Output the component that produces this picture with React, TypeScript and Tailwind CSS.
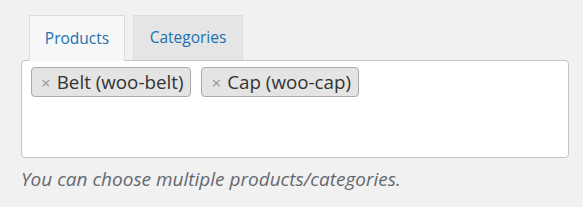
import React from 'react';

const tags = ['Belt (woo-belt)', 'Cap (woo-cap)'];

export default function App() {
  return (
    <div
      className="w-[583px] h-[207px] bg-[#f1f1f1] pt-[15px] pl-[21px]"
      style={{ fontFamily: '"Open Sans", "Noto Sans", sans-serif' }}
    >
      <div className="flex pl-[8px] gap-[8px]">
        <div className="h-[46px] w-[96px] flex items-center justify-center border border-[#dcdcde] border-b-0 bg-[#f6f7f7] text-[15.5px] text-[#2271b1] -mb-px relative">
          Products
        </div>
        <div className="h-[45px] w-[110px] flex items-center justify-center border border-[#dcdcde] border-b-0 bg-[#e5e5e5] text-[15.5px] text-[#2271b1]">
          Categories
        </div>
      </div>
      <div className="w-[548px] h-[98px] bg-white border border-[#c3c4c7] rounded-[4px] pl-[9px] pt-[6px] flex flex-wrap items-start gap-[10px]">
        {tags.map((t) => (
          <div
            key={t}
            className="h-[30px] flex items-center gap-[6px] pl-[9px] pr-[7px] bg-[#e4e4e4] border border-[#aaa] rounded-[4px] text-[18.8px] text-[#333]"
          >
            <span className="text-[#999] text-[17px] leading-none">×</span>
            <span>{t}</span>
          </div>
        ))}
      </div>
      <p className="mt-[7px] text-[19px] italic text-[#646970]">You can choose multiple products/categories.</p>
    </div>
  );
}
